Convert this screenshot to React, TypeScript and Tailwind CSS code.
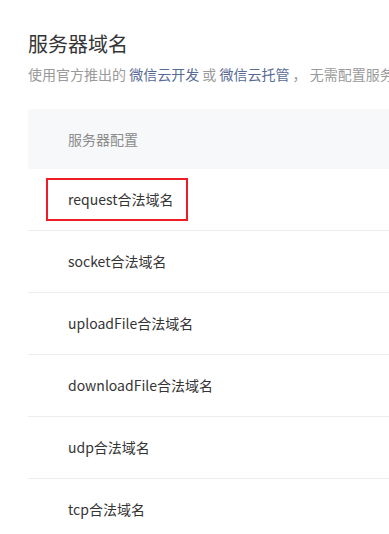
const rows = [
	"socket合法域名",
	"uploadFile合法域名",
	"downloadFile合法域名",
	"udp合法域名",
	"tcp合法域名",
];

const App = () => {
	return (
		<div
			className="w-[389px] h-[534px] overflow-hidden bg-white pl-[28px] pt-[30px]"
			style={{ fontFamily: '"Noto Sans CJK SC", "Noto Sans", sans-serif' }}
		>
			<h2 className="text-[20px] leading-[28px] text-[#353535] font-normal">服务器域名</h2>
			<p className="mt-[6px] text-[14px] leading-[20px] text-[#9a9a9a] whitespace-nowrap">
				使用官方推出的 <span className="text-[#576b95]">微信云开发</span> 或{" "}
				<span className="text-[#576b95]">微信云托管</span> ， 无需配置服务器域名即可使用
			</p>

			<div className="mt-[25px] w-[500px]">
				<div className="h-[60px] bg-[#f6f8f9] flex items-center pl-[40px] text-[14px] text-[#8c8c8c]">
					服务器配置
				</div>
				<div className="h-[62px] border-b border-[#ececec] flex items-center pl-[40px] text-[14px] text-[#353535]">
					<span className="relative">
						request合法域名
						<span className="absolute -left-[22px] -right-[14px] -top-[11px] -bottom-[11px] border-2 border-[#ee1c25]" />
					</span>
				</div>
				{rows.map((r) => (
					<div
						key={r}
						className="h-[62px] border-b border-[#ececec] flex items-center pl-[40px] text-[14px] text-[#353535]"
					>
						{r}
					</div>
				))}
			</div>
		</div>
	);
};

export default App;
